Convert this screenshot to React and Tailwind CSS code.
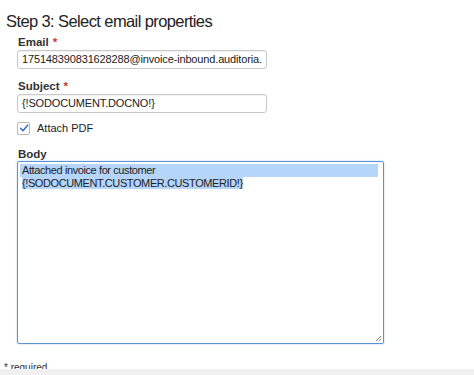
import React from 'react'

const font = { fontFamily: '"Liberation Sans", Arial, sans-serif' }

function Label({ children, required }) {
  return (
    <div className="text-[11.5px] font-bold text-[#333] leading-[13px] ml-[18px]">
      {children}
      {required && <span className="text-[#d0312d] ml-[4px]">*</span>}
    </div>
  )
}

export default function App() {
  return (
    <div className="w-[474px] h-[375px] bg-white overflow-hidden flex flex-col" style={font}>
      <div className="flex-1 flex flex-col">
        <h2 className="text-[16.5px] leading-[20px] tracking-[-0.6px] text-[#222] ml-[6px] mt-[11px]">Step 3: Select email properties</h2>

        <div className="mt-[5px]">
          <Label required>Email</Label>
          <div className="ml-[17px] mt-[1px] w-[250px] h-[19px] border border-[#c8c8c8] rounded-[3px] shadow-[inset_0_1px_1px_rgba(0,0,0,0.06)] px-[4px] flex items-center overflow-hidden">
            <span className="text-[11px] tracking-[-0.15px] text-[#222] whitespace-nowrap">175148390831628288@invoice-inbound.auditoria.</span>
          </div>
        </div>

        <div className="mt-[11px]">
          <Label required>Subject</Label>
          <div className="ml-[17px] mt-[1px] w-[250px] h-[19px] border border-[#c8c8c8] rounded-[3px] shadow-[inset_0_1px_1px_rgba(0,0,0,0.06)] px-[4px] flex items-center">
            <span className="text-[11px] tracking-[-0.15px] text-[#222] whitespace-nowrap">{'{!SODOCUMENT.DOCNO!}'}</span>
          </div>
        </div>

        <div className="ml-[17px] mt-[7px] flex items-center gap-[7px]">
          <div className="w-[13px] h-[13px] border border-[#b8b8b8] rounded-[2px] bg-white flex items-center justify-center">
            <svg width="10" height="10" viewBox="0 0 10 10">
              <path d="M1.5 5.3 L4 7.8 L8.6 2.2" fill="none" stroke="#2f6fcf" strokeWidth="1.5" strokeLinecap="round" strokeLinejoin="round" />
            </svg>
          </div>
          <span className="text-[11px] text-[#222]">Attach PDF</span>
        </div>

        <div className="mt-[11px]">
          <Label>Body</Label>
          <div className="relative ml-[17px] w-[367px] h-[183px] border border-[#5a93d8] rounded-[2px] shadow-[0_0_2px_rgba(90,147,216,0.5)] pt-[2px] px-[2px]">
            <div className="text-[11px] leading-[13px] tracking-[-0.4px] text-[#222]">
              <div className="bg-[#b5d5fb] w-[358px] pl-[2px]">Attached invoice for customer</div>
              <div className="pl-[2px]">
                <span className="bg-[#b5d5fb]">{'{!SODOCUMENT.CUSTOMER.CUSTOMERID!}'}</span>
              </div>
            </div>
            <svg className="absolute right-[1px] bottom-[1px]" width="8" height="8" viewBox="0 0 8 8">
              <path d="M7 2 L2 7 M7 5 L5 7" stroke="#8a8a8a" strokeWidth="1" />
            </svg>
          </div>
        </div>

        <div className="mt-auto ml-[4px] text-[10px] leading-[10px] text-[#333] h-[6px] overflow-hidden">* required</div>
      </div>
      <div className="h-[6px] bg-[#f0f0f0]" />
    </div>
  )
}
